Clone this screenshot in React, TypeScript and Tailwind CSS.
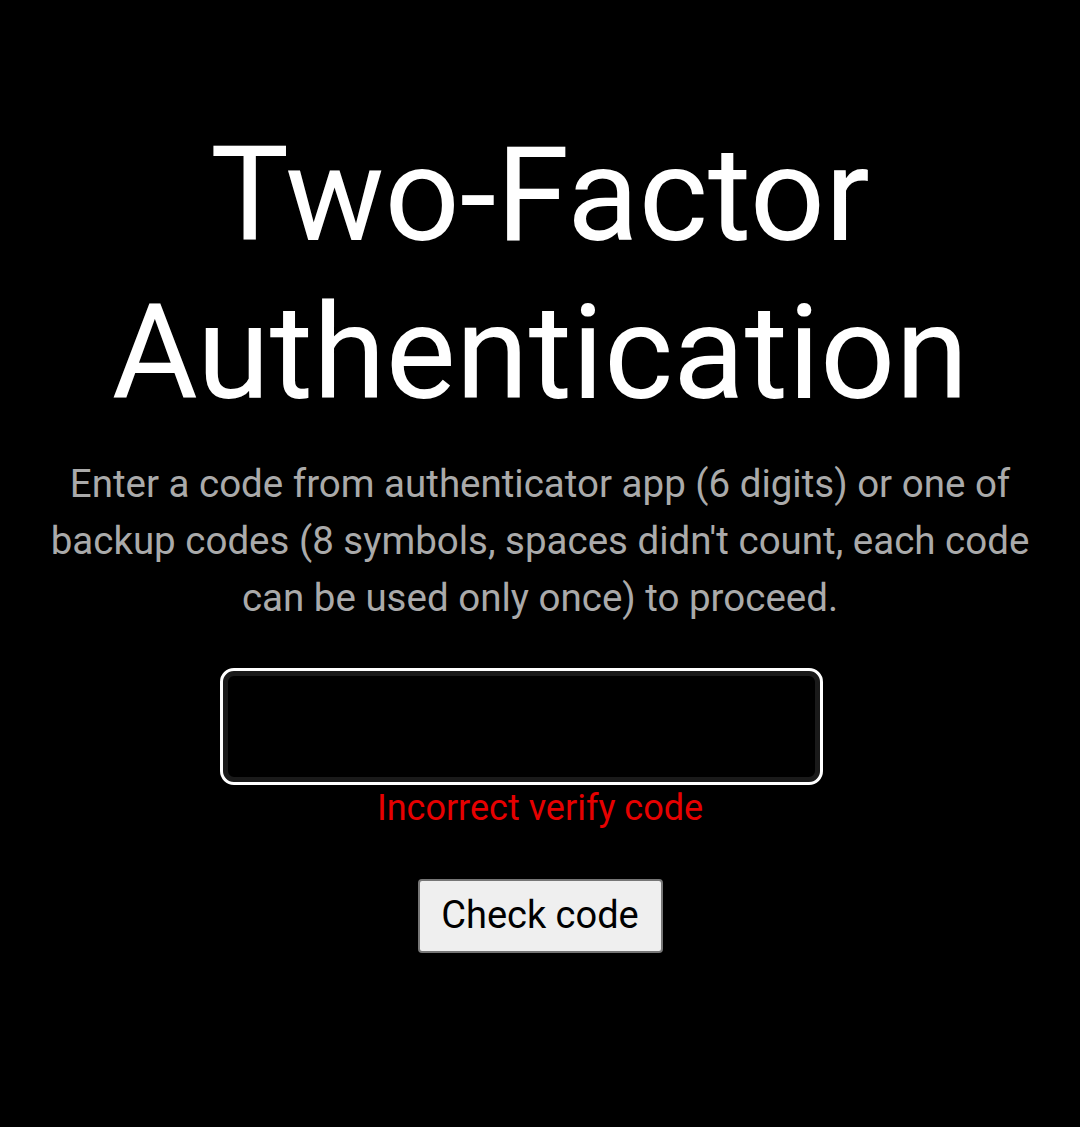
export default function App() {
  return (
    <div className="min-h-[1127px] bg-black font-['Roboto',sans-serif] text-center">
      <div className="flex flex-col items-center px-[36px] pt-[116px]">
        <h1 className="text-[132px] leading-[1.2] font-normal text-white">
          Two-Factor Authentication
        </h1>
        <p className="mt-[22px] text-[38.5px] leading-[57px] text-[#aaaaaa]">
          Enter a code from authenticator app (6 digits) or one of backup codes (8 symbols, spaces didn't count, each code can be used only once) to proceed.
        </p>
        <input
          type="text"
          className="mt-[42px] mr-[37px] h-[117px] w-[603px] rounded-[14px] border-[3px] border-white bg-black shadow-[inset_0_0_0_5px_#1a1a1a] outline-none"
        />
        <div className="mt-[1px] text-[36px] leading-[44px] text-[#e60000]">
          Incorrect verify code
        </div>
        <button className="mt-[49px] h-[74px] w-[245px] rounded-[4px] border-2 border-[#767676] bg-[#efefef] text-[38px] text-black">
          Check code
        </button>
      </div>
    </div>
  );
}
